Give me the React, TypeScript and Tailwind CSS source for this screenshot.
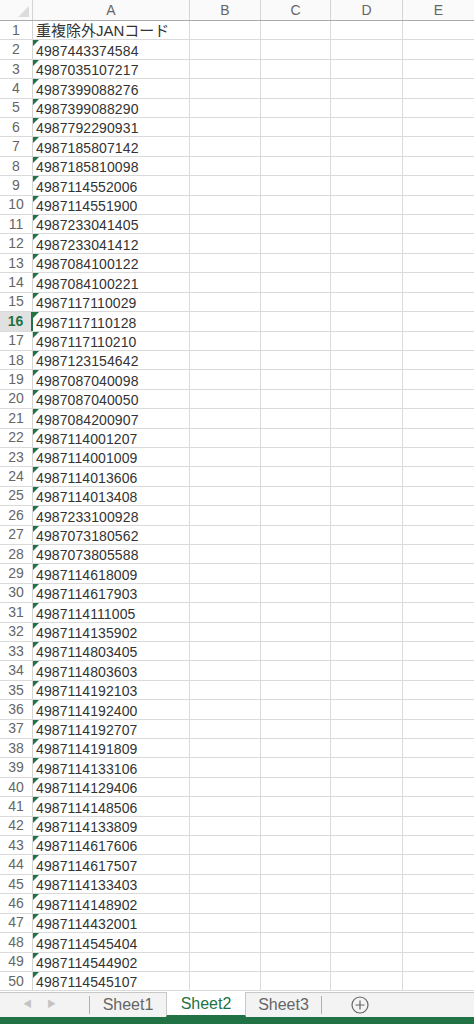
import React from 'react';

const codes = [
    '4987443374584', '4987035107217', '4987399088276', '4987399088290', '4987792290931',
    '4987185807142', '4987185810098', '4987114552006', '4987114551900', '4987233041405',
    '4987233041412', '4987084100122', '4987084100221', '4987117110029', '4987117110128',
    '4987117110210', '4987123154642', '4987087040098', '4987087040050', '4987084200907',
    '4987114001207', '4987114001009', '4987114013606', '4987114013408', '4987233100928',
    '4987073180562', '4987073805588', '4987114618009', '4987114617903', '4987114111005',
    '4987114135902', '4987114803405', '4987114803603', '4987114192103', '4987114192400',
    '4987114192707', '4987114191809', '4987114133106', '4987114129406', '4987114148506',
    '4987114133809', '4987114617606', '4987114617507', '4987114133403', '4987114148902',
    '4987114432001', '4987114545404', '4987114544902', '4987114545107',
];

const rows = ['重複除外JANコード', ...codes];
const font = { fontFamily: '"Liberation Sans", "Noto Sans CJK JP", sans-serif' };

export default function App() {
    return (
        <div className="w-[474px] h-[1024px] flex flex-col overflow-hidden bg-white text-[#444]" style={font}>
            {/* column headers */}
            <div className="flex h-[21px] shrink-0 border-b border-[#ababab] bg-[#fafafa] text-[14px] text-[#666]">
                <div className="w-[33px] shrink-0 border-r border-[#d4d4d4] flex items-end justify-end p-[3px]">
                    <div className="w-0 h-0 border-l-[11px] border-l-transparent border-b-[11px] border-b-[#dcdcdc]" />
                </div>
                <div className="w-[157px] shrink-0 border-r border-[#d4d4d4] flex items-center justify-center">A</div>
                <div className="w-[71px] shrink-0 border-r border-[#d4d4d4] flex items-center justify-center">B</div>
                <div className="w-[70px] shrink-0 border-r border-[#d4d4d4] flex items-center justify-center">C</div>
                <div className="w-[72px] shrink-0 border-r border-[#d4d4d4] flex items-center justify-center">D</div>
                <div className="flex-1 flex items-center justify-center">E</div>
            </div>

            {/* rows */}
            <div className="flex flex-col flex-1">
                {rows.map((val, i) => {
                    const n = i + 1;
                    const sel = n === 16;
                    return (
                        <div key={n} className="flex h-[19.42px] shrink-0 border-b border-[#dadada]">
                            <div
                                className={
                                    sel
                                        ? 'w-[33px] shrink-0 border-r-2 border-[#217346] bg-[#e1e1e1] flex items-center justify-center text-[14px] font-bold text-[#217346]'
                                        : 'w-[33px] shrink-0 border-r border-[#d4d4d4] flex items-center justify-center text-[14px] text-[#666]'
                                }
                            >
                                {n}
                            </div>
                            <div className="relative w-[157px] shrink-0 border-r border-[#dadada] flex items-end pb-[1px] pl-[3px] text-[14px] text-[#333] tracking-[0.1px] leading-none">
                                {n > 1 && (
                                    <div className="absolute left-0 top-0 w-0 h-0 border-t-[6px] border-t-[#217346] border-r-[6px] border-r-transparent" />
                                )}
                                <span className={n === 1 ? 'text-[15px] tracking-normal' : ''}>{val}</span>
                            </div>
                            <div className="w-[71px] shrink-0 border-r border-[#dadada]" />
                            <div className="w-[70px] shrink-0 border-r border-[#dadada]" />
                            <div className="w-[72px] shrink-0 border-r border-[#dadada]" />
                            <div className="flex-1" />
                        </div>
                    );
                })}
            </div>

            {/* sheet tabs */}
            <div className="flex h-[25px] shrink-0 border-t border-[#c8c8c8] bg-[#f3f3f3] text-[16px] text-[#666]">
                <div className="w-[89px] shrink-0 flex items-center pl-[23px] gap-[15px] text-[9px] text-[#c4c4c4]">
                    <span>◀</span>
                    <span>▶</span>
                </div>
                <div className="w-px h-[18px] self-center bg-[#b0b0b0]" />
                <div className="w-[76px] shrink-0 flex items-center justify-center">Sheet1</div>
                <div className="w-[80px] shrink-0 -mt-px bg-white border-x border-[#c8c8c8] border-b-2 border-b-[#217346] flex items-center justify-center text-[#217346]">
                    Sheet2
                </div>
                <div className="w-[75px] shrink-0 flex items-center justify-center">Sheet3</div>
                <div className="w-px h-[18px] self-center bg-[#b0b0b0]" />
                <div className="w-[75px] shrink-0 flex items-center justify-center">
                    <svg width="18" height="18" viewBox="0 0 18 18" fill="none" stroke="#666" strokeWidth="1.2">
                        <circle cx="9" cy="9" r="8" />
                        <path d="M9 4.5v9M4.5 9h9" />
                    </svg>
                </div>
            </div>
            <div className="h-[7px] shrink-0 bg-[#217346]" />
        </div>
    );
}
